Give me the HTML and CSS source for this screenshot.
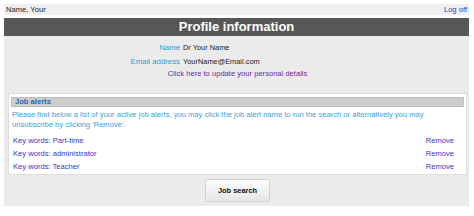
FILE: index.html
```html
<!DOCTYPE html>
<html lang="en">
<head>
  <meta charset="UTF-8" />
  <title>Profile information</title>
  <link rel="stylesheet" href="styles.css">
</head>
<body>
  <div class="topbar">
    <span class="user">Name, Your</span>
    <a href="#" class="logoff">Log off</a>
  </div>

  <h1 class="page-title">Profile information</h1>

  <div class="panel">
    <div class="details">
      <span class="label">Name</span>
      <span class="value">Dr Your Name</span>
      <span class="label">Email address</span>
      <span class="value">YourName@Email.com</span>
    </div>
    <a href="#" class="update-link">Click here to update your personal details</a>

    <div class="alerts">
      <div class="alerts-head">Job alerts</div>
      <p class="alerts-text">Please find below a list of your active job alerts, you may click the job alert name to run the search or alternatively you may unsubscribe by clicking 'Remove'.</p>

      <ul class="alert-list">
        <li><a href="#">Key words: Part-time</a><a href="#">Remove</a></li>
        <li><a href="#">Key words: administrator</a><a href="#">Remove</a></li>
        <li><a href="#">Key words: Teacher</a><a href="#">Remove</a></li>
      </ul>
    </div>

    <div class="actions">
      <button class="btn">Job search</button>
    </div>
  </div>
</body>
</html>
```

FILE: styles.css
```css
* {
  margin: 0;
  padding: 0;
  box-sizing: border-box;
}
body {
  font-family: "Liberation Sans", Arial, sans-serif;
  font-size: 7.6px;
  color: #222;
  background: #fff;
  width: 465px;
  margin: 4px 5px 4px 4px;
}
a {
  text-decoration: none;
}

/* barra do topo */
.topbar {
  display: flex;
  justify-content: space-between;
  align-items: center;
  height: 11px;
  padding: 0 2px;
  background: #efefef;
  line-height: 11px;
}
.logoff {
  color: #2b3fd0;
}

.page-title {
  margin-top: 3px;
  height: 18px;
  line-height: 18px;
  background: #575757;
  color: #fff;
  font-size: 13px;
  text-align: center;
}

.panel {
  background: #ebebeb;
  padding: 5px 2px 4px 4px;
}

/* dados do perfil */
.details {
  display: grid;
  grid-template-columns: 172px 1fr;
  grid-auto-rows: 13px;
  column-gap: 3px;
  row-gap: 1px;
  line-height: 13px;
}
.label {
  text-align: right;
  color: #2f9bd6;
  font-size: 7.8px;
}
.value {
  color: #222;
  font-size: 7.4px;
}
.update-link {
  display: block;
  text-align: center;
  color: #6a2d9a;
  line-height: 12px;
  margin-bottom: 13px;
}

/* job alerts */
.alerts {
  background: #fff;
  border: 1px solid #dedede;
  padding: 3px 2px 1px 2px;
}
.alerts-head {
  background: #cdcdcd;
  border: 1px solid #bdbdbd;
  height: 10px;
  line-height: 8px;
  padding-left: 3px;
  font-weight: bold;
  color: #2067b8;
}
.alerts-text {
  color: #35a3dc;
  line-height: 10px;
  padding: 3px 1px 0;
}
.alert-list {
  list-style: none;
  margin-top: 4px;
  padding: 0 10px 0 2px;
  line-height: 13px;
}
.alert-list li {
  display: flex;
  justify-content: space-between;
}
.alert-list a {
  color: #3a35c0;
}

.actions {
  display: flex;
  justify-content: center;
  padding-top: 4px;
}
.btn {
  width: 65px;
  height: 23px;
  font-family: inherit;
  font-size: 7.4px;
  font-weight: bold;
  color: #111;
  background: linear-gradient(#fdfdfd, #e6e6e6);
  border: 1px solid #d2d2d2;
  border-radius: 2px;
}
```
